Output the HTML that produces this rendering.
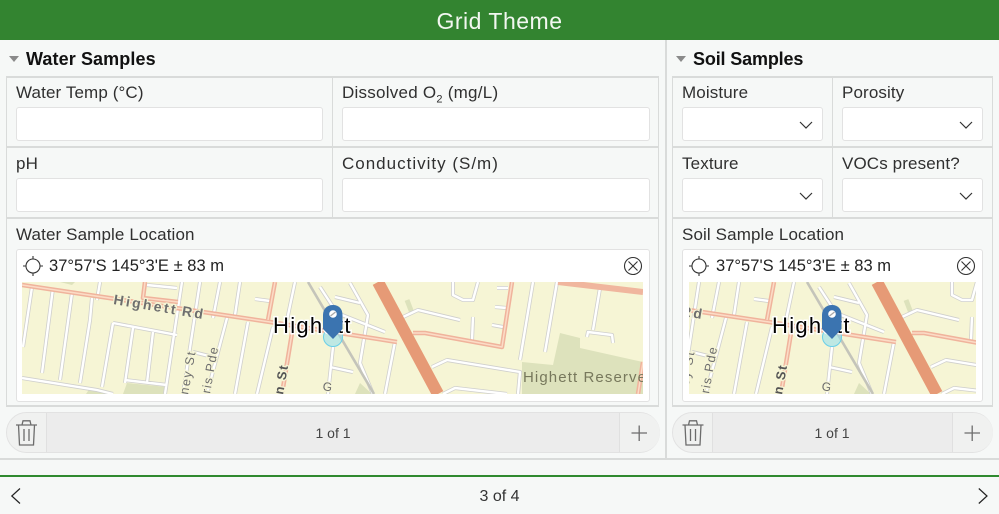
<!DOCTYPE html>
<html><head><meta charset="utf-8"><style>
html,body{margin:0;padding:0;width:999px;height:514px;overflow:hidden;background:#f6f8f7}
body{position:relative;font-family:"Liberation Sans",sans-serif;color:#2f2f2f}
.a{position:absolute}
.t{position:absolute;white-space:nowrap;line-height:20px}
.lb{font-size:17px;color:#303030;letter-spacing:.12px}
.h{font-size:18px;font-weight:bold;color:#111;letter-spacing:.1px}
.inp{position:absolute;background:#fff;border:1px solid #e2e2e2;border-radius:3px;box-sizing:border-box}
.ln{position:absolute;background:#d9dbda}
.tri{position:absolute;width:0;height:0;border-left:5.5px solid transparent;border-right:5.5px solid transparent;border-top:6px solid #8a8a8a}
.tb{position:absolute;top:412px;height:41px;background:#ececec;border:1px solid #e2e2e2;border-radius:21px;box-sizing:border-box}
.card{position:absolute;top:249px;height:153px;background:#fff;border:1px solid #e2e2e2;border-radius:3px;box-sizing:border-box}
svg{position:absolute;overflow:hidden}
.loc{font-size:16.5px;color:#222;letter-spacing:.03px}
</style></head><body>
<div class="a" style="left:0;top:0;width:999px;height:40px;background:#338430"></div>
<div class="t" style="left:0;top:8.5px;width:999px;text-align:center;font-size:23px;color:#f2f7f0;line-height:24px;letter-spacing:.5px">Grid Theme</div>

<div class="tri" style="left:9px;top:56px"></div>
<div class="t h" style="left:26px;top:48.500px">Water Samples</div>
<div class="tri" style="left:676px;top:56px"></div>
<div class="t h" style="left:693px;top:48.500px;letter-spacing:-.15px">Soil Samples</div>

<div class="ln" style="left:665px;top:40px;width:2px;height:419px"></div>
<div class="ln" style="left:0;top:458px;width:999px;height:2px"></div>

<!-- water table -->
<div class="a" style="left:6px;top:76px;width:653px;height:331px;border:1px solid #d9dbda;box-sizing:border-box;border-width:2px 1px 2px 1px"></div>
<div class="ln" style="left:6px;top:146px;width:653px;height:2px"></div>
<div class="ln" style="left:6px;top:217px;width:653px;height:2px"></div>
<div class="ln" style="left:332px;top:76px;width:1px;height:142px"></div>
<!-- soil table -->
<div class="a" style="left:672px;top:76px;width:321px;height:331px;border:1px solid #d9dbda;box-sizing:border-box;border-width:2px 1px 2px 1px"></div>
<div class="ln" style="left:672px;top:146px;width:321px;height:2px"></div>
<div class="ln" style="left:672px;top:217px;width:321px;height:2px"></div>
<div class="ln" style="left:832px;top:76px;width:1px;height:142px"></div>

<div class="t lb" style="left:16px;top:83px">Water Temp (°C)</div>
<div class="t lb" style="left:342px;top:83px;letter-spacing:.25px">Dissolved O<sub style="font-size:11px;line-height:0">2</sub> (mg/L)</div>
<div class="t lb" style="left:16px;top:154px">pH</div>
<div class="t lb" style="left:342px;top:154px;letter-spacing:1px">Conductivity (S/m)</div>
<div class="t lb" style="left:16px;top:225px">Water Sample Location</div>
<div class="t lb" style="left:682px;top:83px">Moisture</div>
<div class="t lb" style="left:842px;top:83px">Porosity</div>
<div class="t lb" style="left:682px;top:154px">Texture</div>
<div class="t lb" style="left:842px;top:154px">VOCs present?</div>
<div class="t lb" style="left:682px;top:225px">Soil Sample Location</div>

<div class="inp" style="left:16px;top:107px;width:307px;height:34px"></div>
<div class="inp" style="left:342px;top:107px;width:308px;height:34px"></div>
<div class="inp" style="left:16px;top:178px;width:307px;height:34px"></div>
<div class="inp" style="left:342px;top:178px;width:308px;height:34px"></div>
<div class="inp" style="left:682px;top:107px;width:141px;height:34px"></div>
<div class="inp" style="left:842px;top:107px;width:141px;height:34px"></div>
<div class="inp" style="left:682px;top:178px;width:141px;height:34px"></div>
<div class="inp" style="left:842px;top:178px;width:141px;height:34px"></div>

<svg style="left:0;top:0" width="999" height="514" viewBox="0 0 999 514" fill="none" stroke="#333" stroke-width="1.2">
<path d="M800 122l6 6 6-6M960 122l6 6 6-6M800 193l6 6 6-6M960 193l6 6 6-6"/>
</svg>

<div class="card" style="left:16px;width:634px"></div>
<div class="card" style="left:682px;width:301px"></div>

<svg style="left:22px;top:282px" width="621" height="112" viewBox="22 282 621 112">
<defs>
<g id="base">
<rect x="0" y="270" width="700" height="140" fill="#f6f5d5"/>
<g fill="#dde2bc">
<path d="M560 333L580 338V348L643 362V394H522V362L553 365Z"/>
<path d="M127 383L167 387L165 394H123ZM90 388L110 394H86ZM355 394L360 383L372 394ZM60 282L75 282L72 285Z"/>
</g>
<path d="M407 300L412 313" stroke="#dde2bc" stroke-width="5" fill="none"/>
<g id="mr" fill="none" stroke-linecap="butt" stroke-linejoin="round">
<path d="M32 287L23 347M53 288L42 373M72 293L60 380M92 298L90 320L80 383M100 282L97 300M113 323L177 335M113 323L102 387M133 328L125 383M153 332L147 383M182 282L165 394M22 378L97 390L113 394M125 380L167 385M200 282L183 394M220 282L213 318M227 318L207 394M240 282L235 315M248 322L235 394M273 327L257 394M295 282L287 320M193 352L213 357M255 299L270 301M147 285L177 288M333 347L328 394M320 287L335 310M335 297L360 303M350 283L368 315L360 363L373 394M342 315L385 332M395 342L385 394M330 367L353 372M403 317L418 310L460 320M473 317L472 340M453 282V295L463 300H473L478 282M497 288L508 288M495 307L507 308M492 325L503 327M533 282L520 360M557 282L545 352M600 288L593 330M587 337L588 332L612 335L613 343M432 367L447 360L520 372L518 394M443 394L455 388L507 394" stroke="#cfcfcd" stroke-width="4"/>
<path d="M32 287L23 347M53 288L42 373M72 293L60 380M92 298L90 320L80 383M100 282L97 300M113 323L177 335M113 323L102 387M133 328L125 383M153 332L147 383M182 282L165 394M22 378L97 390L113 394M125 380L167 385M200 282L183 394M220 282L213 318M227 318L207 394M240 282L235 315M248 322L235 394M273 327L257 394M295 282L287 320M193 352L213 357M255 299L270 301M147 285L177 288M333 347L328 394M320 287L335 310M335 297L360 303M350 283L368 315L360 363L373 394M342 315L385 332M395 342L385 394M330 367L353 372M403 317L418 310L460 320M473 317L472 340M453 282V295L463 300H473L478 282M497 288L508 288M495 307L507 308M492 325L503 327M533 282L520 360M557 282L545 352M600 288L593 330M587 337L588 332L612 335L613 343M432 367L447 360L520 372L518 394M443 394L455 388L507 394" stroke="#fff" stroke-width="2.400"/>
<path d="M308 282L374 394" stroke="#c4c4ba" stroke-width="2.600"/>
<path d="M22 285L270 322L333 332L397 342M413 333L425 333L502 347L512 282M275 282L268 320M145 282L143 298L178 302M293 327L282 394M643 362L638 394" stroke="#f0b39c" stroke-width="4.500"/>
<path d="M22 285L270 322L333 332L397 342M413 333L425 333L502 347L512 282M275 282L268 320M145 282L143 298L178 302M293 327L282 394M643 362L638 394" stroke="#fbdcc6" stroke-width="1.500"/>
<path d="M558 282L643 292" stroke="#f0b69e" stroke-width="6"/>
<path d="M378 282L438 394" stroke="#e69a76" stroke-width="12"/>
</g>
</g>
<g id="pin">
<circle cx="333" cy="337" r="9.500" fill="#8fdcee" fill-opacity=".55" stroke="#69cfe9"/>
</g>
<g id="pin2">
<path d="M333 339L323 329V315C323 309 327 305 333 305C339 305 342.500 309 342.500 315V329Z" fill="#3b74b0"/>
<circle cx="333" cy="314" r="3.800" fill="#fff"/>
<path d="M330.500 316L335.500 312" stroke="#a9a9a9" stroke-width="1.300"/>
</g>
</defs>
<use href="#base"/>
<g font-family="Liberation Sans" fill="#6e6e6e" stroke="#f6f5d5" stroke-width="2.500" style="paint-order:stroke">
<text transform="translate(113 304) rotate(9.500)" font-size="14" font-weight="bold" letter-spacing="2.400" word-spacing="-2">Highett Rd</text>
<text transform="translate(188 395) rotate(-80)" font-size="12.500" letter-spacing="1.500">ney St</text>
<text transform="translate(210 394) rotate(-80)" font-size="12.500" letter-spacing="1.300">ris Pde</text>
<text transform="translate(283 395) rotate(-80)" font-size="13" font-weight="bold" letter-spacing="1.500" fill="#555">n St</text>
<text x="323" y="391" font-size="12" transform="rotate(8 329 385)">G</text>
</g>
<text x="523" y="382" font-family="Liberation Sans" font-size="15" letter-spacing="1.100" fill="#77785c">Highett Reserve</text>
<use href="#pin"/>
<text x="273" y="333" font-family="Liberation Sans" font-size="22" letter-spacing="1.300" fill="#000" stroke="#fff" stroke-width="3" style="paint-order:stroke">Highett</text>
<use href="#pin2"/>
</svg>

<svg style="left:689px;top:282px" width="287" height="112" viewBox="190 282 287 112">
<use href="#base"/>
<g font-family="Liberation Sans" fill="#6e6e6e" stroke="#f6f5d5" stroke-width="2.500" style="paint-order:stroke">
<text transform="translate(113 304) rotate(9.500)" font-size="14" font-weight="bold" letter-spacing="2.400" word-spacing="-2">Highett Rd</text>
<text transform="translate(188 395) rotate(-80)" font-size="12.500" letter-spacing="1.500">ney St</text>
<text transform="translate(210 394) rotate(-80)" font-size="12.500" letter-spacing="1.300">ris Pde</text>
<text transform="translate(283 395) rotate(-80)" font-size="13" font-weight="bold" letter-spacing="1.500" fill="#555">n St</text>
<text x="323" y="391" font-size="12" transform="rotate(8 329 385)">G</text>
</g>
<use href="#pin"/>
<text x="273" y="333" font-family="Liberation Sans" font-size="22" letter-spacing="1.300" fill="#000" stroke="#fff" stroke-width="3" style="paint-order:stroke">Highett</text>
<use href="#pin2"/>
</svg>

<div class="t loc" style="left:49px;top:256px">37°57'S 145°3'E ± 83 m</div>
<div class="t loc" style="left:716px;top:256px">37°57'S 145°3'E ± 83 m</div>

<svg style="left:0;top:0" width="999" height="514" viewBox="0 0 999 514" fill="none" stroke="#333" stroke-width="1.100">
<g><circle cx="33" cy="266" r="7"/><path d="M23 266h3.500M39.500 266h3.500M33 256v3.500M33 272.500v3.500"/></g>
<g transform="translate(666 0)"><circle cx="33" cy="266" r="7"/><path d="M23 266h3.500M39.500 266h3.500M33 256v3.500M33 272.500v3.500"/></g>
<circle cx="633" cy="266" r="8.500"/><path d="M628.500 261.500l9 9M637.500 261.500l-9 9"/>
<circle cx="966" cy="266" r="8.500"/><path d="M961.500 261.500l9 9M970.500 261.500l-9 9"/>
</svg>

<!-- toolbars -->
<div class="tb" style="left:6px;width:654px"></div>
<div class="tb" style="left:672px;width:321px"></div>
<div class="a" style="left:7px;top:413px;width:39px;height:39px;background:#f0f1f0;border-radius:20px 0 0 20px;border-right:1px solid #e0e0e0"></div>
<div class="a" style="left:619px;top:413px;width:40px;height:39px;background:#f0f1f0;border-radius:0 20px 20px 0;border-left:1px solid #e0e0e0"></div>
<div class="a" style="left:673px;top:413px;width:39px;height:39px;background:#f0f1f0;border-radius:20px 0 0 20px;border-right:1px solid #e0e0e0"></div>
<div class="a" style="left:952px;top:413px;width:40px;height:39px;background:#f0f1f0;border-radius:0 20px 20px 0;border-left:1px solid #e0e0e0"></div>
<div class="t" style="left:300px;top:423px;width:66px;text-align:center;font-size:14px;color:#444">1 of 1</div>
<div class="t" style="left:799px;top:423px;width:66px;text-align:center;font-size:14px;color:#444">1 of 1</div>

<svg style="left:0;top:0" width="999" height="514" viewBox="0 0 999 514" fill="none" stroke="#6c6c6c" stroke-width="1.300">
<g><path d="M16 425H37M22 425L23 420.800H30L31 425M18.500 425L19.500 445H33.500L34.500 425M24 429V441M29 429V441"/></g>
<g transform="translate(666.500 0)"><path d="M16 425H37M22 425L23 420.800H30L31 425M18.500 425L19.500 445H33.500L34.500 425M24 429V441M29 429V441"/></g>
<path d="M631.500 433h15.500M639.200 425.500v15.500M964.500 433h15.500M972.200 425.500v15.500"/>
</svg>

<!-- footer -->
<div class="a" style="left:0;top:475px;width:999px;height:2px;background:#2f8a2f"></div>
<div class="t" style="left:0;top:486.500px;width:999px;text-align:center;font-size:16px;color:#333">3 of 4</div>
<svg style="left:0;top:0" width="999" height="514" viewBox="0 0 999 514" fill="none" stroke="#222" stroke-width="1.200">
<path d="M20 488.500L11.800 496L20 503.500M978.800 488.500L987 496L978.800 503.500"/>
</svg>
</body></html>
